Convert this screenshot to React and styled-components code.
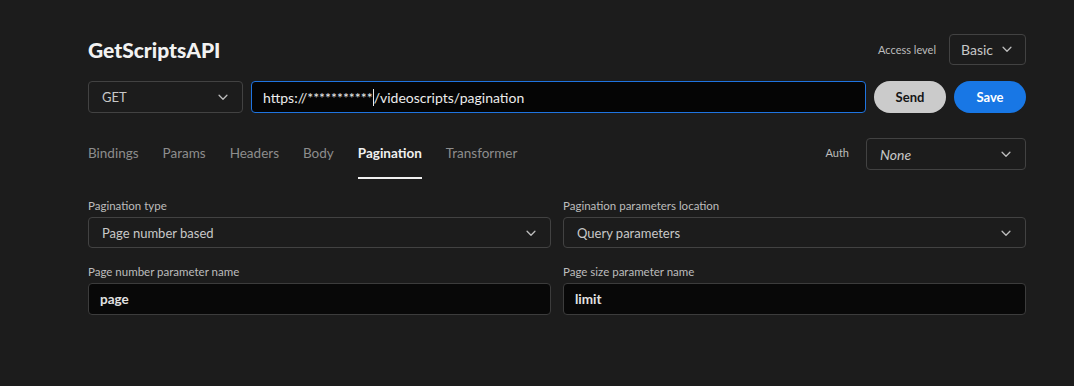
import React, { useState } from 'react';
import styled, { createGlobalStyle } from 'styled-components';

const GlobalStyle = createGlobalStyle`
  html, body {
    margin: 0;
    padding: 0;
    background: #1c1c1c;
  }
  body {
    font-family: Lato, "Noto Sans", sans-serif;
    color: #e6e6e6;
  }
`

const Page = styled.div`
  width: 1074px;
  height: 386px;
  box-sizing: border-box;
  padding: 34px 48px 0 88px;
  background: #1c1c1c;
`
const HeaderRow = styled.div`
  display: flex;
  align-items: center;
  justify-content: space-between;
  height: 30px;
`
const Title = styled.h1`
  margin: 0;
  font-size: 21px;
  font-weight: 900;
  color: #f2f2f2;
`
const Inline = styled.div`
  display: flex;
  align-items: center;
  gap: ${p => p.gap || 12}px;
`
const SmallLabel = styled.span`
  font-size: 11px;
  color: #bdbdbd;
  margin-top: ${p => p.lift ? '-4px' : '0'};
`
const SelectBox = styled.div`
  display: flex;
  align-items: center;
  justify-content: space-between;
  box-sizing: border-box;
  width: ${p => p.width ? p.width + 'px' : '100%'};
  height: ${p => p.height || 31}px;
  padding: 0 ${p => p.padRight || 12}px 0 ${p => p.padLeft || 13}px;
  border: 1px solid #424242;
  border-radius: 4px;
  background: #1c1c1c;
  font-size: ${p => p.fontSize || 13}px;
  color: #c8c8c8;
  font-style: ${p => p.italic ? 'italic' : 'normal'};
`
const RequestRow = styled.div`
  display: flex;
  align-items: center;
  gap: 8px;
  margin-top: 17px;
  height: 32px;
`
const UrlInput = styled.div`
  flex: 1;
  display: flex;
  align-items: center;
  box-sizing: border-box;
  height: 32px;
  padding: 0 11px;
  border: 1px solid #1f74e0;
  border-radius: 4px;
  background: #050505;
  font-size: 14px;
  color: #ececec;
`
const Caret = styled.span`
  display: inline-block;
  width: 1px;
  height: 17px;
  background: #e8e8e8;
`
const Pill = styled.button`
  width: 72px;
  height: 32px;
  border: none;
  border-radius: 16px;
  font-family: inherit;
  font-size: 13px;
  font-weight: 700;
  background: ${p => p.primary ? '#1877e5' : '#cbcbcb'};
  color: ${p => p.primary ? '#ffffff' : '#151515'};
`
const TabRow = styled.div`
  display: flex;
  align-items: flex-start;
  justify-content: space-between;
  margin-top: 25px;
  height: 40px;
`
const Tabs = styled.div`
  display: flex;
  gap: 24px;
`
const Tab = styled.div`
  display: flex;
  align-items: center;
  box-sizing: border-box;
  height: 41px;
  padding: 2px 0 12px;
  font-size: 13.5px;
  color: ${p => p.active ? '#f0f0f0' : '#8d8d8d'};
  font-weight: ${p => p.active ? 700 : 400};
  border-bottom: 2px solid ${p => p.active ? '#f0f0f0' : 'transparent'};
  cursor: pointer;
`
const Form = styled.div`
  display: grid;
  grid-template-columns: 1fr 1fr;
  column-gap: 12px;
  row-gap: 17px;
  margin-top: 21px;
`
const Field = styled.div`
  display: flex;
  flex-direction: column;
  gap: 5px;
`
const FieldLabel = styled.label`
  font-size: 11.5px;
  color: #bcbcbc;
`
const TextInput = styled.div`
  display: flex;
  align-items: center;
  box-sizing: border-box;
  height: 32px;
  padding: 0 11px;
  border: 1px solid #3c3c3c;
  border-radius: 4px;
  background: #080808;
  font-size: 13.5px;
  font-weight: 700;
  color: #e2e2e2;
`

const Chevron = ({ size = 14 }) => (
  <svg width={size} height={size} viewBox="0 0 16 16" fill="none">
    <path d="M3.5 6l4.5 4.5L12.5 6" stroke="#bdbdbd" strokeWidth="1.5" strokeLinecap="round" strokeLinejoin="round" />
  </svg>
)

const tabs = ['Bindings', 'Params', 'Headers', 'Body', 'Pagination', 'Transformer'];

export default function App() {
  const [active, setActive] = useState('Pagination');
  return (
    <>
      <GlobalStyle />
      <Page>
        <HeaderRow>
          <Title>GetScriptsAPI</Title>
          <Inline gap={13}>
            <SmallLabel>Access level</SmallLabel>
            <SelectBox width={77} height={31} padLeft={11} padRight={11} fontSize={14}>
              Basic <Chevron />
            </SelectBox>
          </Inline>
        </HeaderRow>

        <RequestRow>
          <SelectBox width={155} height={32} fontSize={13}>
            GET <Chevron />
          </SelectBox>
          <UrlInput>
            https://***********<Caret />/videoscripts/pagination
          </UrlInput>
          <Pill>Send</Pill>
          <Pill primary>Save</Pill>
        </RequestRow>

        <TabRow>
          <Tabs>
            {tabs.map(t => (
              <Tab key={t} active={t === active} onClick={() => setActive(t)}>{t}</Tab>
            ))}
          </Tabs>
          <Inline gap={17}>
            <SmallLabel lift>Auth</SmallLabel>
            <SelectBox width={160} height={32} italic fontSize={14}>
              None <Chevron />
            </SelectBox>
          </Inline>
        </TabRow>

        <Form>
          <Field>
            <FieldLabel>Pagination type</FieldLabel>
            <SelectBox>Page number based <Chevron /></SelectBox>
          </Field>
          <Field>
            <FieldLabel>Pagination parameters location</FieldLabel>
            <SelectBox>Query parameters <Chevron /></SelectBox>
          </Field>
          <Field>
            <FieldLabel>Page number parameter name</FieldLabel>
            <TextInput>page</TextInput>
          </Field>
          <Field>
            <FieldLabel>Page size parameter name</FieldLabel>
            <TextInput>limit</TextInput>
          </Field>
        </Form>
      </Page>
    </>
  );
}
